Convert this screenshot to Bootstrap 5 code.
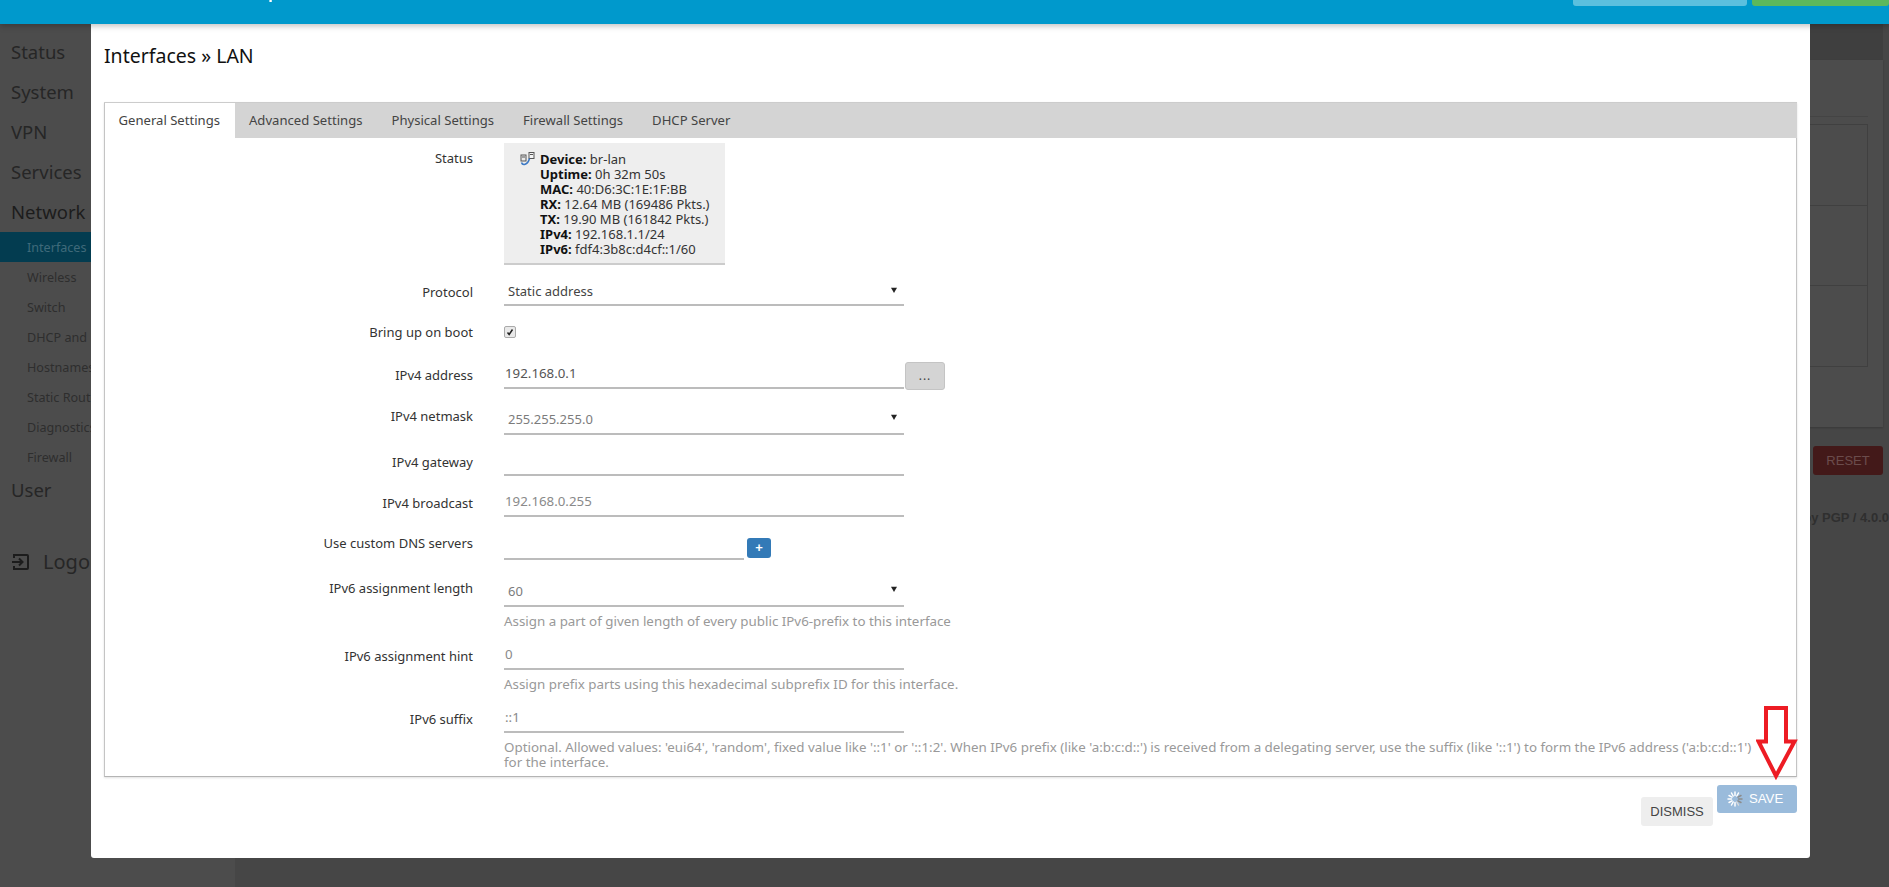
<!DOCTYPE html>
<html lang="en">
<head>
  <meta charset="UTF-8" />
  <meta name="viewport" content="width=device-width, initial-scale=1" />
  <title>Interfaces - LAN</title>
  <link href="https://cdn.jsdelivr.net/npm/bootstrap@5.3.0/dist/css/bootstrap.min.css" rel="stylesheet" />
  <style>
    html, body { height: 887px; overflow: hidden; }
    body { font-family: "Noto Sans", sans-serif; font-size: 13px; background: #464646; color: #333; }

    /* top bar */
    .topbar { height: 24px; background: #0099cc; position: relative; z-index: 1060; box-shadow: 0 2px 6px rgba(0,0,0,.25); overflow: hidden; }
    .brand { font-size: 26px; line-height: 30px; color: #fff; margin: -29px 0 0 247px; }
    .top-btn { height: 6px; border-radius: 0 0 3px 3px; }
    .top-info { width: 174px; background: #5bc0de; margin-right: 5px; }
    .top-ok { width: 137px; background: #5cb85c; }

    /* page behind the dialog */
    .shell { height: 863px; }
    .side { width: 235px; background: #4c4c4c; padding-top: 8px; flex-shrink: 0; }
    .side-main { display: block; font-size: 18.5px; line-height: 40px; padding-left: 11px; color: #262626; white-space: nowrap; text-decoration: none; }
    .side-main.open { color: #1c1c1c; }
    .side-main.user { line-height: 36px; }
    .side-main.logout { margin-top: 34px; display: flex; align-items: center; gap: 13px; font-size: 20px; }
    .side-sub { display: block; font-size: 12.6px; height: 30px; line-height: 30px; padding: 1px 0 0 27px; color: #2e2e2e; white-space: nowrap; text-decoration: none; }
    .side-sub.on { background: #033c50; color: #3f6a7a; }
    .back-band { height: 36px; background: #3f3f3f; margin-right: 6px; }
    .back-card { height: 367px; background: #4c4c4c; margin-right: 6px; padding: 56px 15px 0 0; box-shadow: 0 1px 2px rgba(0,0,0,.2); }
    .back-rule { border-top: 1px solid #444; height: 8px; }
    .back-table { height: 243px; border: 1px solid #404040; }
    .back-table > div { flex: 1; border-bottom: 1px solid #404040; }
    .back-table > div:last-child { border-bottom: 0; }
    .back-reset { width: 70px; height: 29px; margin: 19px 6px 0 auto; background: #431919; color: #6b4c4c; border-radius: 3px; font: 13px/29px "Liberation Sans", sans-serif; text-align: center; }
    .back-foot { margin-top: 34px; text-align: right; font: bold 13px/18px "Liberation Sans", sans-serif; color: #2f2f2f; white-space: nowrap; margin-right: 0; }

    /* dialog */
    .modal-dialog.lan-dialog { max-width: 1719px; width: 1719px; margin: 24px 0 0 91px; }
    .lan-dialog .modal-content { height: 834px; border: 0; border-radius: 0 0 3px 3px; background: #fff; display: block; }
    .lan-title { font-size: 19.5px; line-height: 26px; color: #111; padding: 19px 0 0 13px; height: 78px; margin: 0; font-weight: 400; }

    .lan-panel { margin: 0 13px; height: 675px; border: 1px solid #c4c4c4; border-top: 0; border-bottom-color: #b4b4b4; box-shadow: 0 1px 2px rgba(0,0,0,.12); }
    .lan-tabs { background: #d4d4d4; height: 36px; border: 0; margin: 0 -1px; flex-wrap: nowrap; border-top: 1px solid #ccc; }
    .lan-tabs .nav-link { border: 0; border-radius: 0; padding: 0 14.5px; line-height: 35px; height: 35px; color: #444; white-space: nowrap; font-size: 13.1px; margin: 0; }
    .lan-tabs .nav-link.active { background: #fff; color: #444; border-left: 1px solid #c4c4c4; padding-left: 13.5px; }

    .f-row { display: flex; min-height: 26px; }
    .f-lbl { width: 369px; flex-shrink: 0; text-align: right; line-height: 18px; padding-top: 3px; color: #333; margin-left: -1px; }
    .f-lbl.up { margin-top: -5px; }
    .f-lbl.dns { padding-top: 0; }
    .f-lbl.top { padding-top: 11px; }
    .f-val { margin-left: 31px; width: 400px; }
    .g13 { margin-top: 13px; } .g14 { margin-top: 14px; } .g15 { margin-top: 15px; }
    .g17 { margin-top: 17px; } .g19 { margin-top: 19px; } .g21 { margin-top: 21px; }

    .f-input.form-control, .f-input.form-select {
      height: 26px; min-height: 0; border: 0; border-bottom: 2px solid #bcbcbc; border-radius: 0; box-shadow: none;
      background-color: #fff; font-size: 13.3px; line-height: 20px; padding: 0 0 4px 1px; color: #555;
    }
    .f-input.form-control::placeholder { color: #8a8a8a; opacity: 1; }
    .f-input.form-select {
      padding: 0 20px 6px 4px; color: #7c7c7c; font-size: 13px;
      background-image: url("data:image/svg+xml,%3csvg xmlns='http://www.w3.org/2000/svg' viewBox='0 0 7 7'%3e%3cpath d='M0 1h7L3.500 7z' fill='%23222'/%3e%3c/svg%3e");
      background-size: 6px 6px; background-position: right 7px top 5px;
    }
    .f-input.form-select.dark { color: #444; padding-bottom: 3px; background-position: right 7px top 7px; }
    .f-short { width: 240px; }
    .f-help { color: #999; font-size: 13.35px; line-height: 15px; padding-top: 7px; white-space: nowrap; }

    .status-box { margin: 5px 0 0 0; width: 221px; height: 122px; background: #eee; border-bottom: 2px solid #ccc; padding: 9px 0 0 16px; display: flex; gap: 5px; font-size: 13px; line-height: 15px; color: #333; white-space: nowrap; }
    .status-box b { color: #111; }
    .status-gap { height: 129px; }

    .f-check.form-check-input { width: 12px; height: 12px; margin: 6px 0 0 0; border: 1px solid #aaa; border-radius: 2px; background-color: #e9e9e9;
      background-image: url("data:image/svg+xml,%3csvg xmlns='http://www.w3.org/2000/svg' viewBox='0 0 12 12'%3e%3cpath d='M3 6.500l2 2.500 4-6' fill='none' stroke='%23222' stroke-width='1.800'/%3e%3c/svg%3e"); box-shadow: none; }
    .dots-btn { width: 40px; height: 28px; margin: -1px 0 0 1px; padding: 0; border: 1px solid #c4c4c4; border-radius: 3px; background: #d4d4d4; color: #444; font-size: 12px; line-height: 22px; letter-spacing: 1px; flex-shrink: 0; }
    .plus-btn { width: 24px; height: 20px; margin: 4px 0 0 3px; padding: 0; border: 0; border-radius: 3px; background: #337ab7; color: #fff; font: bold 13px/20px "Liberation Sans", sans-serif; flex-shrink: 0; }

    .lan-foot { padding: 8px 13px 0 0; gap: 4px; }
    .btn-dismiss.btn { width: 72px; height: 29px; margin-top: 12px; padding: 0; border: 0; border-radius: 3px; background: #eee; color: #444; font: 13px/30px "Liberation Sans", sans-serif; text-transform: uppercase; }
    .btn-save.btn { width: 80px; height: 28px; padding: 0 0 0 10px; border: 0; border-radius: 3px; background: #9abbdb; color: #fff; font: 13.2px/28px "Liberation Sans", sans-serif; text-transform: uppercase; display: flex; align-items: center; gap: 6px; opacity: 1; }
    .red-arrow { position: absolute; left: 1665px; top: 682px; }
  </style>
</head>
<body>
  <div class="topbar d-flex justify-content-between">
    <div class="brand">OpenWrt</div>
    <div class="d-flex">
      <div class="top-btn top-info"></div>
      <div class="top-btn top-ok"></div>
    </div>
  </div>

  <div class="shell d-flex">
    <nav class="side">
      <a class="side-main" href="#">Status</a>
      <a class="side-main" href="#">System</a>
      <a class="side-main" href="#">VPN</a>
      <a class="side-main" href="#">Services</a>
      <a class="side-main open" href="#">Network</a>
      <a class="side-sub on" href="#">Interfaces</a>
      <a class="side-sub" href="#">Wireless</a>
      <a class="side-sub" href="#">Switch</a>
      <a class="side-sub" href="#">DHCP and DNS</a>
      <a class="side-sub" href="#">Hostnames</a>
      <a class="side-sub" href="#">Static Routes</a>
      <a class="side-sub" href="#">Diagnostics</a>
      <a class="side-sub" href="#">Firewall</a>
      <a class="side-main user" href="#">User</a>
      <a class="side-main logout" href="#">
        <svg width="19" height="18" viewBox="0 0 19 18" fill="none" stroke="#1c1c1c" stroke-width="2"><path d="M3 5V2h13a1 1 0 0 1 1 1v12a1 1 0 0 1-1 1H3v-3"/><path d="M1 9h10M8 5.500l3.500 3.500L8 12.500"/></svg>
        Logout
      </a>
    </nav>
    <main class="flex-grow-1">
      <div class="back-band"></div>
      <div class="back-card">
        <div class="back-rule"></div>
        <div class="back-table d-flex flex-column"><div></div><div></div><div></div></div>
      </div>
      <div class="back-reset">RESET</div>
      <div class="back-foot">Powered by PGP / 4.0.0</div>
    </main>
  </div>

  <div class="modal d-block">
    <div class="modal-dialog lan-dialog">
      <div class="modal-content">
        <h4 class="lan-title">Interfaces » LAN</h4>

        <div class="lan-panel">
          <ul class="nav nav-tabs lan-tabs">
            <li class="nav-item"><a class="nav-link active" href="#">General Settings</a></li>
            <li class="nav-item"><a class="nav-link" href="#">Advanced Settings</a></li>
            <li class="nav-item"><a class="nav-link" href="#">Physical Settings</a></li>
            <li class="nav-item"><a class="nav-link" href="#">Firewall Settings</a></li>
            <li class="nav-item"><a class="nav-link" href="#">DHCP Server</a></li>
          </ul>

          <div class="f-row status-gap">
            <label class="f-lbl top">Status</label>
            <div class="f-val">
              <div class="status-box">
                <svg width="15" height="14" viewBox="0 0 15 14" class="flex-shrink-0"><rect x="1" y="3" width="5" height="6" fill="#e8e8e8" stroke="#555"/><rect x="9" y="0.500" width="5" height="6" fill="#f4f4f4" stroke="#555"/><path d="M2 5h3M10 2.500h3" stroke="#555"/><path d="M1.500 10.500c1 3 6 3 8-4" fill="none" stroke="#3b78c4" stroke-width="1.600"/></svg>
                <div>
                  <b>Device:</b> br-lan<br>
                  <b>Uptime:</b> 0h 32m 50s<br>
                  <b>MAC:</b> 40:D6:3C:1E:1F:BB<br>
                  <b>RX:</b> 12.64 MB (169486 Pkts.)<br>
                  <b>TX:</b> 19.90 MB (161842 Pkts.)<br>
                  <b>IPv4:</b> 192.168.1.1/24<br>
                  <b>IPv6:</b> fdf4:3b8c:d4cf::1/60
                </div>
              </div>
            </div>
          </div>

          <div class="f-row g13">
            <label class="f-lbl">Protocol</label>
            <div class="f-val"><select class="form-select f-input dark"><option>Static address</option></select></div>
          </div>
          <div class="f-row g14">
            <label class="f-lbl">Bring up on boot</label>
            <div class="f-val"><input class="form-check-input f-check d-block" type="checkbox" checked /></div>
          </div>
          <div class="f-row g17">
            <label class="f-lbl">IPv4 address</label>
            <div class="f-val d-flex flex-shrink-0"><input class="form-control f-input flex-shrink-0" value="192.168.0.1" /><button class="btn dots-btn" type="button">...</button></div>
          </div>
          <div class="f-row g19">
            <label class="f-lbl up">IPv4 netmask</label>
            <div class="f-val"><select class="form-select f-input"><option>255.255.255.0</option></select></div>
          </div>
          <div class="f-row g15">
            <label class="f-lbl">IPv4 gateway</label>
            <div class="f-val"><input class="form-control f-input" /></div>
          </div>
          <div class="f-row g15">
            <label class="f-lbl">IPv4 broadcast</label>
            <div class="f-val"><input class="form-control f-input" placeholder="192.168.0.255" /></div>
          </div>
          <div class="f-row g17">
            <label class="f-lbl dns">Use custom DNS servers</label>
            <div class="f-val d-flex"><input class="form-control f-input f-short" /><button class="btn plus-btn" type="button">+</button></div>
          </div>
          <div class="f-row g21">
            <label class="f-lbl up">IPv6 assignment length</label>
            <div class="f-val">
              <select class="form-select f-input"><option>60</option></select>
              <div class="f-help">Assign a part of given length of every public IPv6-prefix to this interface</div>
            </div>
          </div>
          <div class="f-row g15">
            <label class="f-lbl">IPv6 assignment hint</label>
            <div class="f-val">
              <input class="form-control f-input" placeholder="0" />
              <div class="f-help">Assign prefix parts using this hexadecimal subprefix ID for this interface.</div>
            </div>
          </div>
          <div class="f-row g15">
            <label class="f-lbl">IPv6 suffix</label>
            <div class="f-val">
              <input class="form-control f-input" placeholder="::1" />
              <div class="f-help">Optional. Allowed values: 'eui64', 'random', fixed value like '::1' or '::1:2'. When IPv6 prefix (like 'a:b:c:d::') is received from a delegating server, use the suffix (like '::1') to form the IPv6 address ('a:b:c:d::1')<br>for the interface.</div>
            </div>
          </div>
        </div>

        <div class="lan-foot d-flex justify-content-end align-items-start">
          <button class="btn btn-dismiss" type="button">Dismiss</button>
          <button class="btn btn-save" type="button">
            <svg width="16" height="16" viewBox="0 0 16 16" stroke-width="1.500" stroke-linecap="round">
              <g stroke="#fff"><path d="M8 1v3.500M11.500 2l-1.700 3M4.500 2l1.700 3M2 4.500l3 1.700M1 8h3.500M2 11.500l3-1.700M4.500 14l1.700-3M8 15v-3.500"/></g>
              <g stroke="#d9d9d9"><path d="M11.500 14l-1.700-3"/></g>
              <g stroke="#8c8c8c"><path d="M14 11.500l-3-1.700M15 8h-3.500M14 4.500l-3 1.700"/></g>
            </svg>
            Save
          </button>
        </div>

        <svg class="red-arrow" width="42" height="74" viewBox="0 0 42 74" fill="none" stroke="#ed1c24" stroke-width="4">
          <path d="M10 2h20v33.500h8.500L20 70 2.500 35.500H10z"/>
        </svg>
      </div>
    </div>
  </div>

  <script src="https://cdn.jsdelivr.net/npm/bootstrap@5.3.0/dist/js/bootstrap.bundle.min.js"></script>
</body>
</html>
